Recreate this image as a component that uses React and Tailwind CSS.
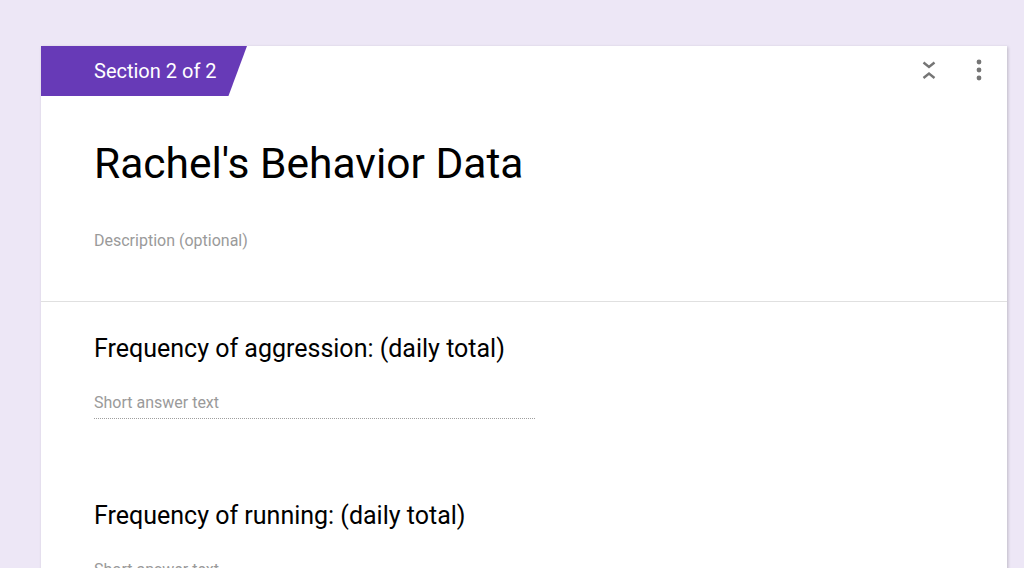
export default function App() {
  return (
    <div className="h-[568px] overflow-hidden bg-[#ede7f6] pt-[46px] pl-[41px] font-['Roboto',sans-serif]">
      <div className="bg-white w-[966px] shadow-[1px_1px_3px_rgba(0,0,0,0.2)]">
        <div className="flex items-start justify-between">
          <div className="h-[50px] w-[206px] bg-[#673ab7] [clip-path:polygon(0_0,100%_0,91%_100%,0_100%)] flex items-center pl-[53px] text-white text-[20px]">
            Section 2 of 2
          </div>
          <div className="flex items-center gap-[26px] pr-[16px] pt-[12px]">
            <svg width="24" height="24" viewBox="0 0 24 24" fill="none" stroke="#757575" strokeWidth="2.4">
              <path d="M6.5 4.5l5.5 4.5 5.5-4.5" />
              <path d="M6.5 20l5.5-4.5 5.5 4.5" />
            </svg>
            <svg width="24" height="24" viewBox="0 0 24 24" fill="#757575">
              <circle cx="12" cy="4" r="2.4" />
              <circle cx="12" cy="12" r="2.4" />
              <circle cx="12" cy="20" r="2.4" />
            </svg>
          </div>
        </div>
        <div className="pl-[53px] pr-6 pt-[44px] pb-[50px] border-b border-[#e0e0e0]">
          <h1 className="text-[42.5px] leading-[48px] text-black">Rachel's Behavior Data</h1>
          <p className="mt-[43px] text-[16px] leading-[20px] text-[#9a9a9a]">Description (optional)</p>
        </div>
        <div className="pl-[53px] pt-[31px] pb-[81px]">
          <h2 className="text-[25px] leading-[32px] text-black">Frequency of aggression: (daily total)</h2>
          <div className="mt-[28px] w-[441px] border-b border-dotted border-[#9e9e9e] pb-[5px] text-[16px] leading-[20px] text-[#9a9a9a]">
            Short answer text
          </div>
        </div>
        <div className="pl-[53px] pb-[80px]">
          <h2 className="text-[25px] leading-[32px] text-black">Frequency of running: (daily total)</h2>
          <div className="mt-[28px] w-[441px] border-b border-dotted border-[#9e9e9e] pb-[5px] text-[16px] leading-[20px] text-[#9a9a9a]">
            Short answer text
          </div>
        </div>
      </div>
    </div>
  );
}
